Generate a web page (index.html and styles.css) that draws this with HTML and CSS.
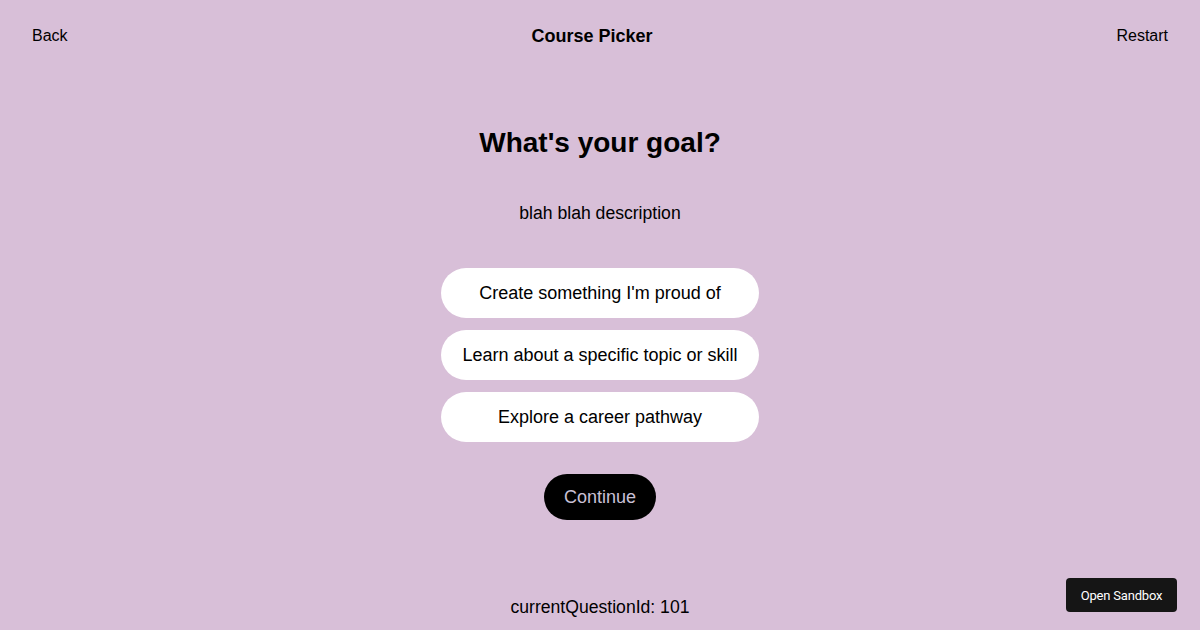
FILE: index.html
```html
<!DOCTYPE html>
<html lang="en">
<head>
  <meta charset="UTF-8">
  <title>Course Picker</title>
  <link rel="stylesheet" href="styles.css">
</head>
<body>
  <header class="barra">
    <a href="#" class="barra-link">Back</a>
    <span class="barra-titulo">Course Picker</span>
    <a href="#" class="barra-link">Restart</a>
  </header>

  <main class="pregunta">
    <h1 class="pregunta-titulo">What's your goal?</h1>
    <p class="pregunta-desc">blah blah description</p>
    <div class="opciones">
      <button class="opcion">Create something I'm proud of</button>
      <button class="opcion">Learn about a specific topic or skill</button>
      <button class="opcion">Explore a career pathway</button>
    </div>
    <button class="continuar">Continue</button>
    <p class="debug">currentQuestionId: 101</p>
  </main>

  <a href="#" class="sandbox">Open Sandbox</a>
</body>
</html>
```

FILE: styles.css
```css
body {
  margin: 0;
  background-color: thistle;
  font-family: "Liberation Sans", Arial, sans-serif;
  color: black;
  height: 630px;
  overflow: hidden;
}

.barra {
  display: flex;
  justify-content: space-between;
  align-items: center;
  height: 70px;
  padding: 1px 32px 0;
}

.barra-link {
  color: black;
  text-decoration: none;
  font-size: 16px;
}

.barra-titulo {
  font-weight: bold;
  font-size: 18px;
}

.pregunta {
  display: flex;
  flex-direction: column;
  align-items: center;
}

.pregunta-titulo {
  font-size: 28px;
  line-height: 34px;
  margin: 55px 0 0;
}

.pregunta-desc {
  font-size: 17.6px;
  line-height: 22px;
  margin: 42px 0 0;
}

.opciones {
  display: flex;
  flex-direction: column;
  gap: 12px;
  margin-top: 44px;
}

.opcion {
  width: 318px;
  height: 50px;
  border: none;
  border-radius: 25px;
  background-color: white;
  color: black;
  font-family: "Liberation Sans", Arial, sans-serif;
  font-size: 18px;
  cursor: pointer;
}

.continuar {
  margin-top: 32px;
  width: 112px;
  height: 46px;
  border: none;
  border-radius: 23px;
  background-color: black;
  color: #c9c0d6;
  font-family: "Liberation Sans", Arial, sans-serif;
  font-size: 18px;
  cursor: pointer;
}

.debug {
  font-size: 17.6px;
  line-height: 22px;
  margin: 76px 0 0;
}

.sandbox {
  position: fixed;
  right: 23px;
  bottom: 18px;
  width: 111px;
  height: 34px;
  box-sizing: border-box;
  display: flex;
  align-items: center;
  justify-content: center;
  background-color: #151515;
  border-radius: 4px;
  color: white;
  text-decoration: none;
  font-family: Roboto, sans-serif;
  font-size: 13px;
  letter-spacing: -0.2px;
}
```
